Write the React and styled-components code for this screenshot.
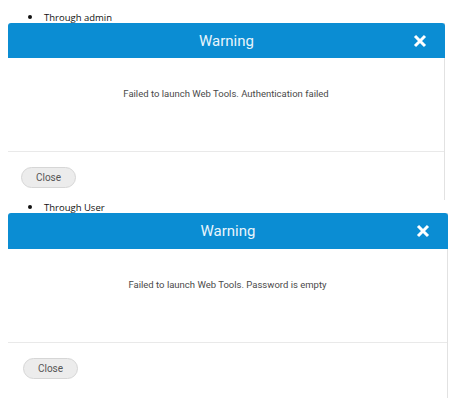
import React from 'react';
import styled, { createGlobalStyle } from 'styled-components';

const Global = createGlobalStyle`
    html, body {
        margin: 0;
        padding: 0;
        background: #fff;
    }
    body {
        font-family: Roboto, "Liberation Sans", sans-serif;
    }
`;

function CloseIcon() {
    return (
        <svg width="14" height="14" viewBox="0 0 14 14">
            <path d="M2 2 L12 12 M12 2 L2 12" stroke="#fff" strokeWidth="3" strokeLinecap="butt" />
        </svg>
    );
}

function WarningDialog(props) {
    return (
        <Dialog width={props.width}>
            <Header height={props.headerHeight}>
                <Title>Warning</Title>
                <X><CloseIcon /></X>
            </Header>
            <Body>
                <Message>{props.message}</Message>
            </Body>
            <Footer pad={props.buttonLeft} foot={props.footHeight}>
                <Button>Close</Button>
            </Footer>
        </Dialog>
    );
}

function App() {
    return (
        <Page>
            <Global />
            <Item top={11}><Dot />Through admin</Item>
            <WarningDialog
                width={436}
                headerHeight={35}
                buttonLeft={13}
                footHeight={48}
                message="Failed to launch Web Tools. Authentication failed"
            />
            <Item top={1}><Dot />Through User</Item>
            <WarningDialog
                width={439}
                headerHeight={36}
                buttonLeft={15}
                footHeight={60}
                message="Failed to launch Web Tools. Password is empty"
            />
        </Page>
    );
}

const Page = styled.div`
    width: 474px;
    height: 398px;
    overflow: hidden;
`;

const Item = styled.div`
    display: flex;
    align-items: center;
    height: 12px;
    margin-top: ${props => props.top}px;
    padding-left: 28px;
    font-family: "Open Sans", "Liberation Sans", sans-serif;
    font-size: 9.5px;
    color: #111;
`;

const Dot = styled.span`
    width: 4px;
    height: 4px;
    border-radius: 50%;
    background: #111;
    margin-right: 12px;
`;

const Dialog = styled.div`
    width: ${props => props.width}px;
    margin-left: 8px;
    border-right: 1px solid #e2e2e2;
    background: #fff;
`;

const Header = styled.div`
    position: relative;
    height: ${props => props.height}px;
    background: #0b8dd3;
    border-radius: 3px 3px 0 0;
    margin-right: -1px;
    display: flex;
    align-items: center;
    justify-content: center;
`;

const Title = styled.span`
    color: #e8f5fc;
    font-size: 15px;
`;

const X = styled.span`
    position: absolute;
    right: 18px;
    top: 50%;
    transform: translateY(-50%);
    display: flex;
`;

const Body = styled.div`
    height: 94px;
    border-bottom: 1px solid #e9e9e9;
    display: flex;
    justify-content: center;
    padding-top: 30px;
    box-sizing: border-box;
`;

const Message = styled.p`
    margin: 0;
    font-size: 9.5px;
    line-height: 12px;
    color: #4a4a4a;
`;

const Footer = styled.div`
    height: ${props => props.foot}px;
    box-sizing: border-box;
    padding: 14px 0 0 ${props => props.pad}px;
`;

const Button = styled.button`
    width: 55px;
    height: 21px;
    border: 1px solid #d6d6d6;
    border-radius: 11px;
    background: #ececec;
    color: #555;
    font-family: Roboto, "Liberation Sans", sans-serif;
    font-size: 10px;
    padding: 0;
`;

export default App;
